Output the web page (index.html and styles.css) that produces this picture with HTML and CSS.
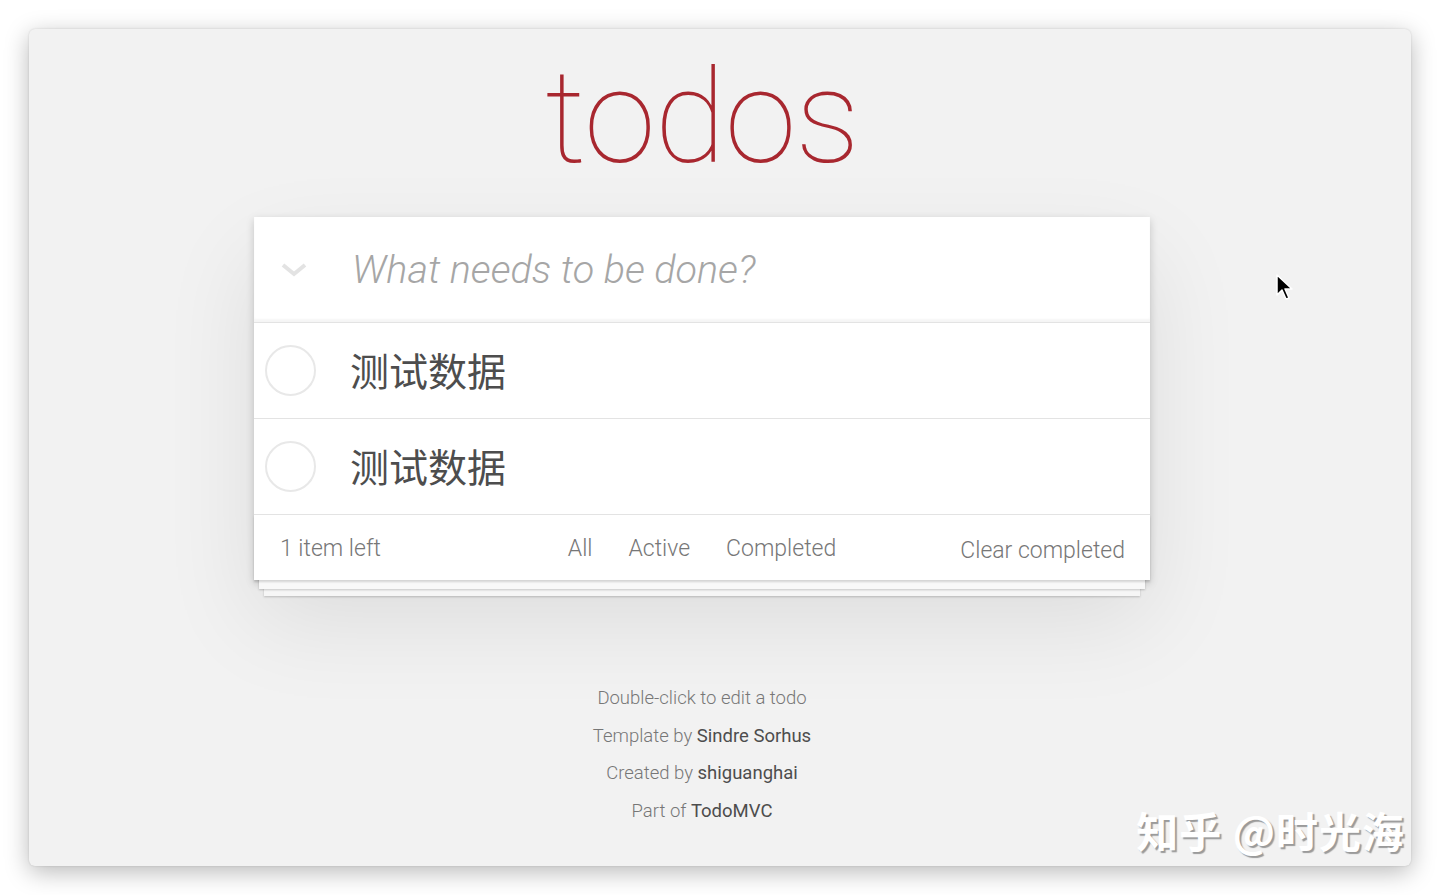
FILE: index.html
```html
<!DOCTYPE html>
<html lang="en">
<head>
    <meta charset="UTF-8">
    <meta name="viewport" content="width=device-width, initial-scale=1.0">
    <title>Todos</title>
    <link rel="stylesheet" href="styles.css">
</head>
<body>
    <div class="window">
        <h1>todos</h1>
        <section class="todoapp">
            <header class="header">
                <span class="toggle-all">
                    <svg width="26" height="14" viewBox="0 0 26 14"><polyline points="2,2 13,11 24,2" fill="none" stroke="#e3e3e3" stroke-width="4"/></svg>
                </span>
                <input class="new-todo" placeholder="What needs to be done?">
            </header>
            <ul class="todo-list">
                <li>
                    <span class="toggle"></span>
                    <label>测试数据</label>
                </li>
                <li>
                    <span class="toggle"></span>
                    <label>测试数据</label>
                </li>
            </ul>
            <footer class="footer">
                <span class="todo-count">1 item left</span>
                <ul class="filters">
                    <li><a href="#/">All</a></li>
                    <li><a href="#/active">Active</a></li>
                    <li><a href="#/completed">Completed</a></li>
                </ul>
                <button class="clear-completed">Clear completed</button>
            </footer>
        </section>
        <footer class="info">
            <p>Double-click to edit a todo</p>
            <p>Template by <a href="#">Sindre Sorhus</a></p>
            <p>Created by <a href="#">shiguanghai</a></p>
            <p>Part of <a href="#">TodoMVC</a></p>
        </footer>
        <div class="watermark">知乎 @时光海</div>
        <svg class="cursor" width="18" height="28" viewBox="0 0 18 28">
            <path d="M1 1 L1 21 L6 16 L10 25 L13 24 L9 15 L16 15 Z" fill="#000" stroke="#fff" stroke-width="1.5" stroke-linejoin="round"/>
        </svg>
    </div>
</body>
</html>
```

FILE: styles.css
```css
body { margin: 0; background: #fff; font-family: Roboto, "Liberation Sans", "Noto Sans CJK SC", sans-serif; font-weight: 300; color: #4d4d4d; }
.window { position: relative; margin: 29px; width: 1382px; height: 837px; padding-right: 36px; box-sizing: border-box; background: #f2f2f2; border-radius: 6px; box-shadow: 0 6px 24px rgba(0,0,0,0.28), 0 0 2px rgba(0,0,0,0.15); overflow: hidden; }
h1 { margin: 0; height: 188px; padding-top: 24px; box-sizing: border-box; text-align: center; font-size: 130px; line-height: 130px; font-weight: 100; color: #a8272f; letter-spacing: -1px; }
.todoapp { width: 896px; margin: 0 auto; background: #fff; box-shadow: 0 3px 8px rgba(0,0,0,0.18), 0 40px 90px rgba(0,0,0,0.09); }
.header { display: flex; align-items: center; height: 105px; box-shadow: inset 0 -3px 2px rgba(0,0,0,0.04); border-bottom: 1px solid #e3e3e3; }
.toggle-all { display: flex; justify-content: center; padding-left: 2px; box-sizing: border-box; margin-left: -20px; width: 118px; }
.new-todo { flex: 1; border: none; outline: none; background: transparent; font-family: inherit; font-size: 39.5px; font-weight: 300; color: #4d4d4d; padding: 0; }
.new-todo::placeholder { font-style: italic; color: #a6a6a6; font-weight: 300; }
.todo-list { list-style: none; margin: 0; padding: 0; }
.todo-list li { display: flex; align-items: center; height: 95px; border-bottom: 1px solid #e3e3e3; }
.toggle { width: 47px; height: 47px; border: 2px solid #e8e8e8; border-radius: 50%; margin-left: 11px; margin-right: 34px; }
.todo-list label { font-family: "Noto Sans CJK SC", sans-serif; font-weight: 400; font-size: 39px; color: #4d4d4d; margin-top: -3px; }
.footer { position: relative; display: flex; align-items: center; justify-content: space-between; height: 65px; padding: 2px 25px 0 26px; box-sizing: border-box; color: #777; font-size: 23px; box-shadow: 0 2px 2px rgba(0,0,0,0.15), 0 14px 0 -5px #f8f8f8, 0 15px 2px -5px rgba(0,0,0,0.2), 0 26px 0 -10px #f6f6f6, 0 27px 2px -10px rgba(0,0,0,0.2); }
.filters { position: absolute; left: 0; right: 0; display: flex; justify-content: center; gap: 36px; list-style: none; margin: 0; padding: 0; pointer-events: none; }
.filters a { color: #777; text-decoration: none; pointer-events: auto; }
.todo-count { position: relative; }
.clear-completed { position: relative; border: none; background: none; padding: 0; font-family: inherit; font-weight: 300; font-size: 23px; color: #777; margin-top: 4px; }
.info { margin-top: 100px; text-align: center; font-size: 18.5px; color: #777; }
.info p { margin: 0; line-height: 37.5px; }
.info a { color: #4d4d4d; font-weight: 400; text-decoration: none; }
.watermark { position: absolute; right: 6px; bottom: 6px; font-family: "Noto Sans CJK SC", sans-serif; font-weight: 700; font-size: 42px; color: #fff; text-shadow: 2px 2px 1px #9a9a9a; letter-spacing: 1px; }
.cursor { position: absolute; left: 1247px; top: 245px; }
```
